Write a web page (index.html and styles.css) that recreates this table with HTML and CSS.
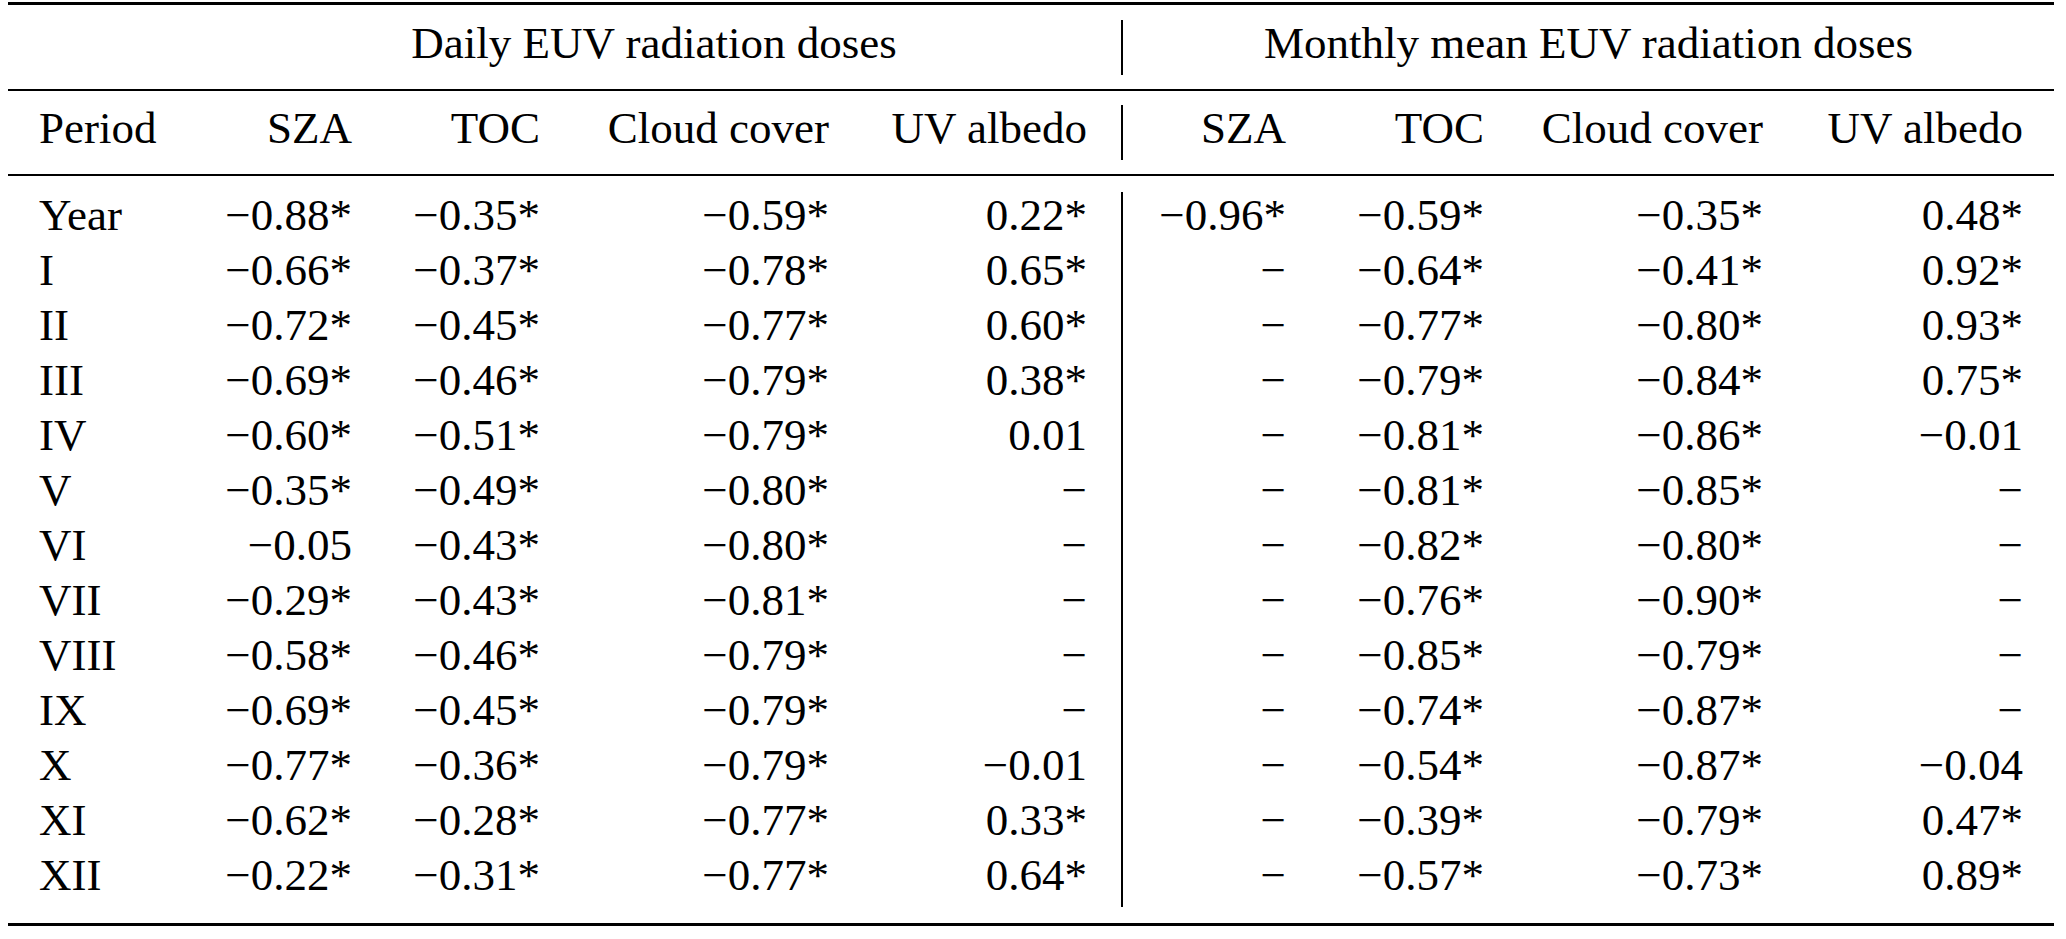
FILE: index.html
```html
<!DOCTYPE html>
<html lang="en">
<head>
<meta charset="utf-8">
<title>EUV radiation doses correlation table</title>
<link rel="stylesheet" href="styles.css">
</head>
<body>
<div class="tab">
  <div class="rule rule-top"></div>

  <div class="cell"></div>
  <div class="cell group daily">Daily EUV radiation doses</div>
  <div class="cell group monthly sep">Monthly mean EUV radiation doses</div>

  <div class="rule rule-mid"></div>

  <div class="cell first">Period</div>
  <div class="cell">SZA</div>
  <div class="cell">TOC</div>
  <div class="cell">Cloud cover</div>
  <div class="cell last-d">UV albedo</div>
  <div class="cell sep">SZA</div>
  <div class="cell">TOC</div>
  <div class="cell">Cloud cover</div>
  <div class="cell">UV albedo</div>

  <div class="rule rule-mid2"></div>

  <div class="cell first">Year</div><div class="cell">−0.88*</div><div class="cell">−0.35*</div><div class="cell">−0.59*</div><div class="cell last-d">0.22*</div><div class="cell sep">−0.96*</div><div class="cell">−0.59*</div><div class="cell">−0.35*</div><div class="cell">0.48*</div>
  <div class="cell first">I</div><div class="cell">−0.66*</div><div class="cell">−0.37*</div><div class="cell">−0.78*</div><div class="cell last-d">0.65*</div><div class="cell sep">−</div><div class="cell">−0.64*</div><div class="cell">−0.41*</div><div class="cell">0.92*</div>
  <div class="cell first">II</div><div class="cell">−0.72*</div><div class="cell">−0.45*</div><div class="cell">−0.77*</div><div class="cell last-d">0.60*</div><div class="cell sep">−</div><div class="cell">−0.77*</div><div class="cell">−0.80*</div><div class="cell">0.93*</div>
  <div class="cell first">III</div><div class="cell">−0.69*</div><div class="cell">−0.46*</div><div class="cell">−0.79*</div><div class="cell last-d">0.38*</div><div class="cell sep">−</div><div class="cell">−0.79*</div><div class="cell">−0.84*</div><div class="cell">0.75*</div>
  <div class="cell first">IV</div><div class="cell">−0.60*</div><div class="cell">−0.51*</div><div class="cell">−0.79*</div><div class="cell last-d">0.01</div><div class="cell sep">−</div><div class="cell">−0.81*</div><div class="cell">−0.86*</div><div class="cell">−0.01</div>
  <div class="cell first">V</div><div class="cell">−0.35*</div><div class="cell">−0.49*</div><div class="cell">−0.80*</div><div class="cell last-d">−</div><div class="cell sep">−</div><div class="cell">−0.81*</div><div class="cell">−0.85*</div><div class="cell">−</div>
  <div class="cell first">VI</div><div class="cell">−0.05</div><div class="cell">−0.43*</div><div class="cell">−0.80*</div><div class="cell last-d">−</div><div class="cell sep">−</div><div class="cell">−0.82*</div><div class="cell">−0.80*</div><div class="cell">−</div>
  <div class="cell first">VII</div><div class="cell">−0.29*</div><div class="cell">−0.43*</div><div class="cell">−0.81*</div><div class="cell last-d">−</div><div class="cell sep">−</div><div class="cell">−0.76*</div><div class="cell">−0.90*</div><div class="cell">−</div>
  <div class="cell first">VIII</div><div class="cell">−0.58*</div><div class="cell">−0.46*</div><div class="cell">−0.79*</div><div class="cell last-d">−</div><div class="cell sep">−</div><div class="cell">−0.85*</div><div class="cell">−0.79*</div><div class="cell">−</div>
  <div class="cell first">IX</div><div class="cell">−0.69*</div><div class="cell">−0.45*</div><div class="cell">−0.79*</div><div class="cell last-d">−</div><div class="cell sep">−</div><div class="cell">−0.74*</div><div class="cell">−0.87*</div><div class="cell">−</div>
  <div class="cell first">X</div><div class="cell">−0.77*</div><div class="cell">−0.36*</div><div class="cell">−0.79*</div><div class="cell last-d">−0.01</div><div class="cell sep">−</div><div class="cell">−0.54*</div><div class="cell">−0.87*</div><div class="cell">−0.04</div>
  <div class="cell first">XI</div><div class="cell">−0.62*</div><div class="cell">−0.28*</div><div class="cell">−0.77*</div><div class="cell last-d">0.33*</div><div class="cell sep">−</div><div class="cell">−0.39*</div><div class="cell">−0.79*</div><div class="cell">0.47*</div>
  <div class="cell first">XII</div><div class="cell">−0.22*</div><div class="cell">−0.31*</div><div class="cell">−0.77*</div><div class="cell last-d">0.64*</div><div class="cell sep">−</div><div class="cell">−0.57*</div><div class="cell">−0.73*</div><div class="cell">0.89*</div>

  <div class="rule rule-bottom"></div>
</div>
</body>
</html>
```

FILE: styles.css
```css
html, body {
  margin: 0;
  padding: 0;
  background: #fff;
}

body {
  font-family: "Liberation Serif", "Times New Roman", serif;
  font-size: 45px;
  color: #000;
}

.tab {
  display: grid;
  grid-template-columns: 179px 196px 188px 289px 261px 196px 198px 279px 260px;
  width: 2046px;
  margin: 2px 0 0 8px;
}

.rule {
  grid-column: 1 / -1;
  background: #000;
}

.rule-top {
  height: 3px;
  margin-bottom: 15px;
}

.rule-mid {
  height: 2px;
  margin: 14px 0;
}

.rule-mid2 {
  height: 2px;
  margin: 14px 0 16px;
}

.rule-bottom {
  height: 3px;
  margin-top: 16px;
}

.cell {
  box-sizing: border-box;
  height: 55px;
  line-height: 47px;
  padding: 0 31px 8px 0;
  text-align: right;
  white-space: nowrap;
}

.cell.first {
  text-align: left;
  padding-left: 31px;
  padding-right: 0;
}

.cell.last-d {
  padding-right: 34px;
}

.cell.sep {
  border-left: 2px solid #000;
}

.group {
  text-align: center;
  padding-right: 0;
}

.daily {
  grid-column: 2 / 6;
}

.monthly {
  grid-column: 6 / 10;
}
```
